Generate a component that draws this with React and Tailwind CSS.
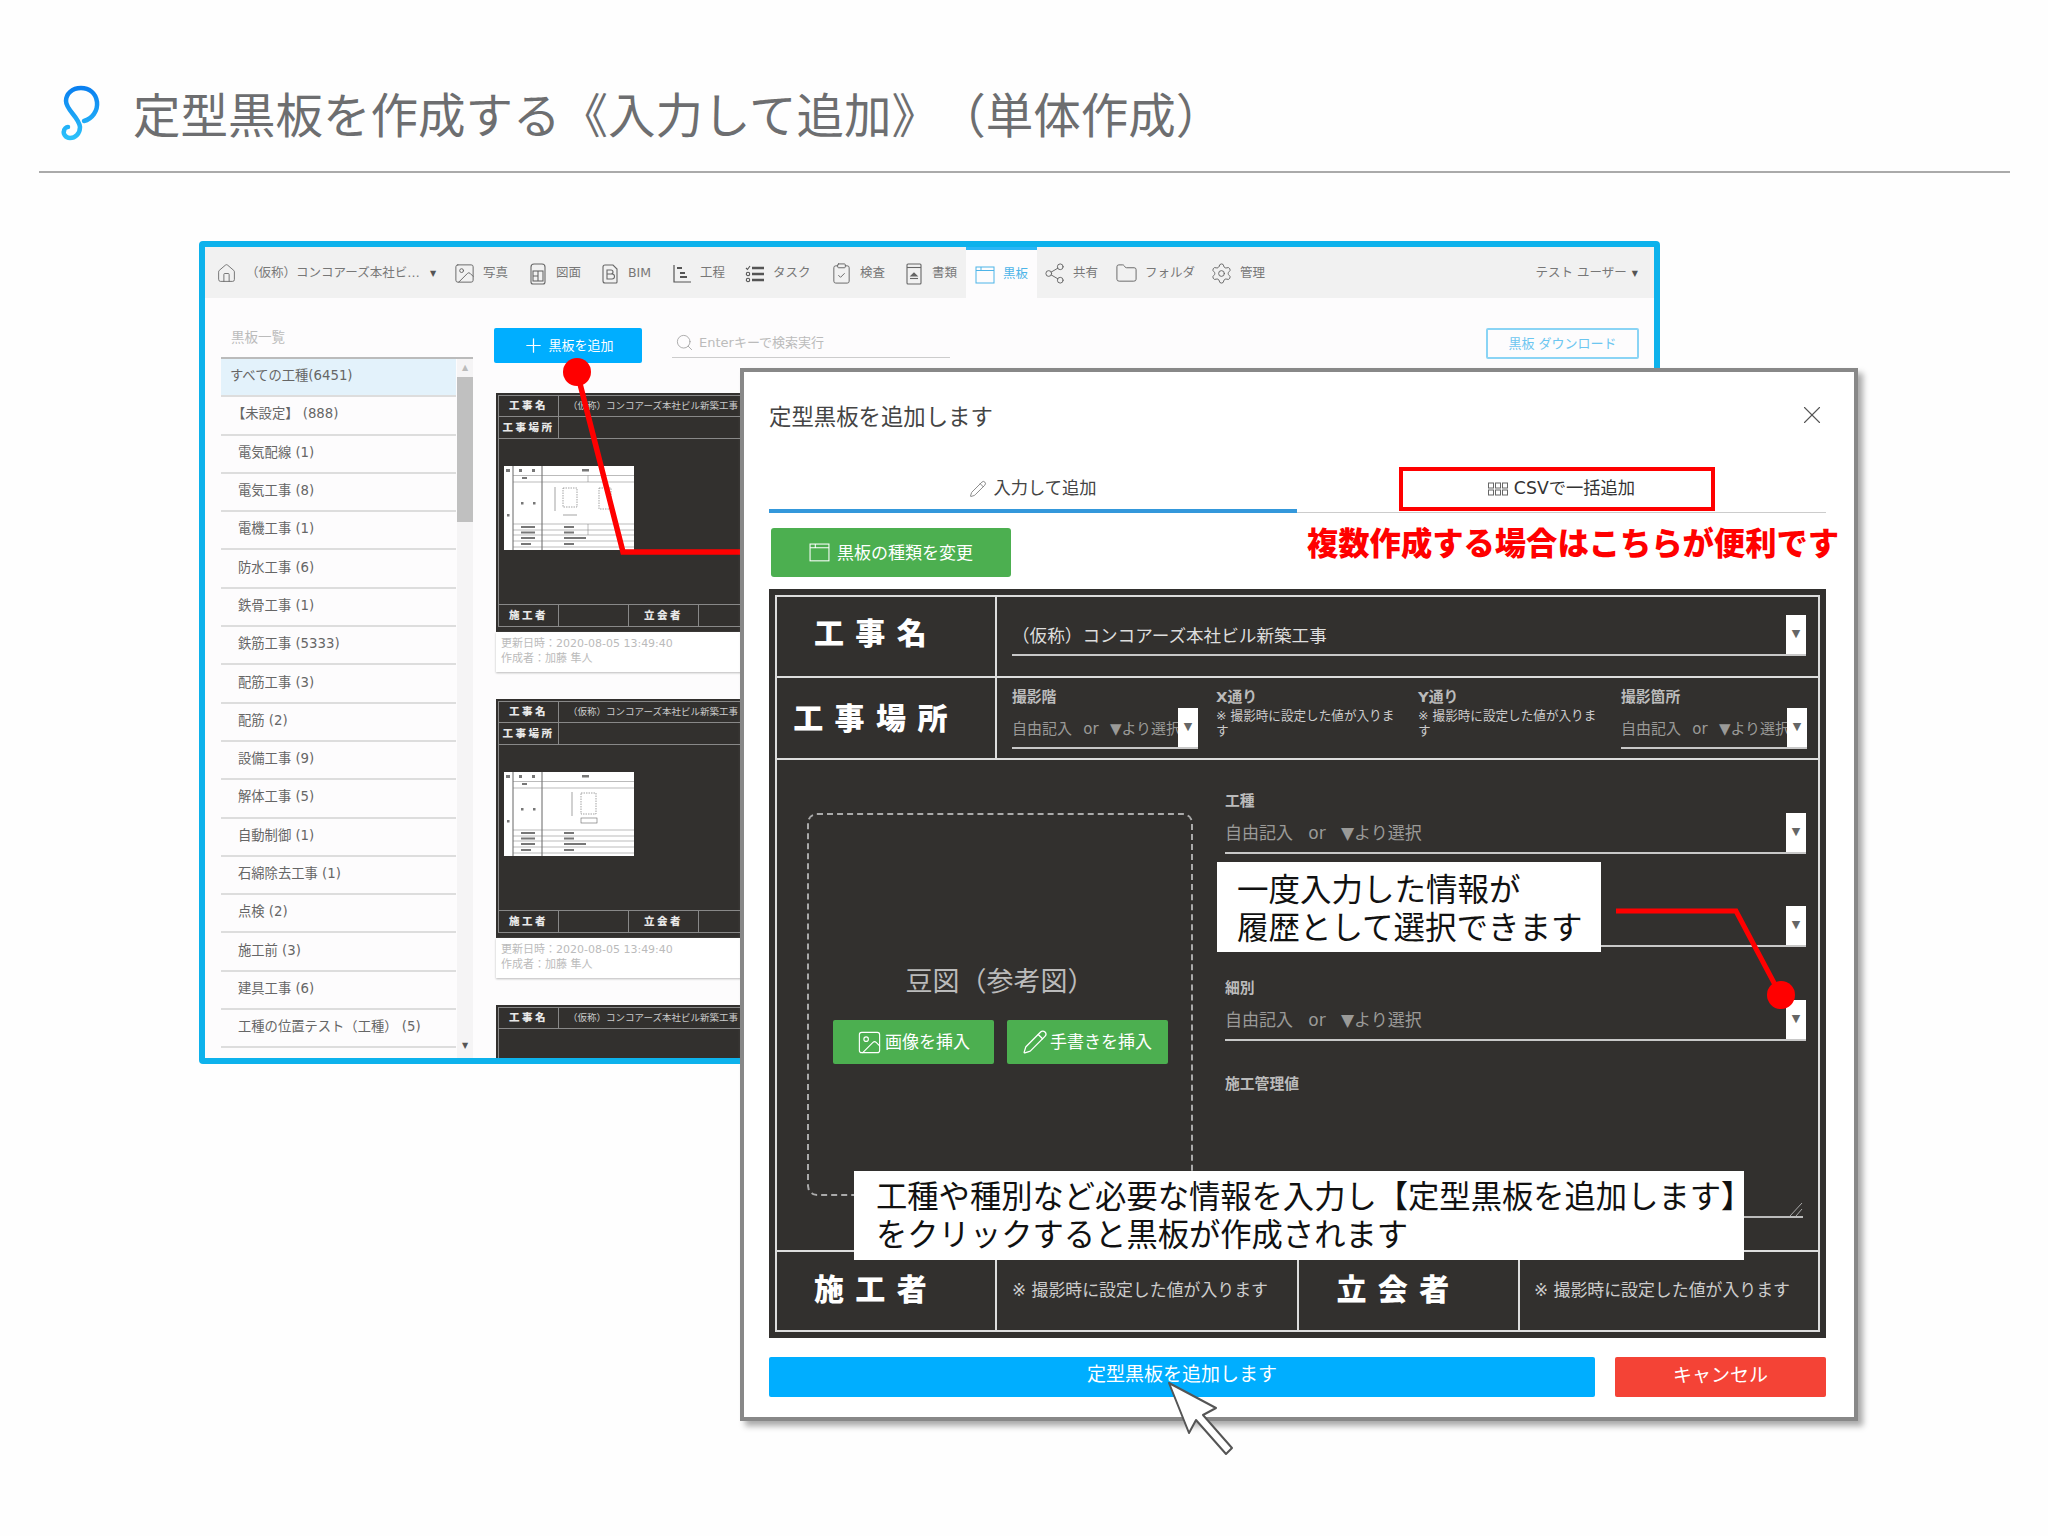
import React from 'react';
import { House, Image, ClipboardCheck, Share2, Folder, Settings, Pencil, Search, Plus, X } from 'lucide-react';

const categories = [
    { name: 'すべての工種(6451)', pl: 'pl-[9px]', active: true },
    { name: '【未設定】 (888)', pl: 'pl-[11px]' },
    { name: '電気配線 (1)' }, { name: '電気工事 (8)' }, { name: '電機工事 (1)' }, { name: '防水工事 (6)' },
    { name: '鉄骨工事 (1)' }, { name: '鉄筋工事 (5333)' }, { name: '配筋工事 (3)' }, { name: '配筋 (2)' },
    { name: '設備工事 (9)' }, { name: '解体工事 (5)' }, { name: '自動制御 (1)' }, { name: '石綿除去工事 (1)' },
    { name: '点検 (2)' }, { name: '施工前 (3)' }, { name: '建具工事 (6)' }, { name: '工種の位置テスト（工種） (5)' },
];

const ICON = { size: 23, strokeWidth: 1, className: 'text-[#666] shrink-0 -ml-[2px]' };

function DocIcon({ kind }) {
    return (
        <svg width="20" height="22" viewBox="0 0 20 22" fill="none" stroke="#666" strokeWidth="1.1" className="shrink-0">
            {kind === 'plan' && <><path d="M6 1h8a3 3 0 0 1 3 3v15a2 2 0 0 1-2 2H5a2 2 0 0 1-2-2V4a3 3 0 0 1 3-3z" /><rect x="5" y="8" width="10" height="10" /><path d="M10 8v10M5 13h5" /></>}
            {kind === 'bim' && <><path d="M5 2h8l4 4v13a1 1 0 0 1-1 1H5a2 2 0 0 1-2-2V4a2 2 0 0 1 2-2z" /><path d="M7 7h4a2 2 0 0 1 0 4H7zM7 11h5a2.5 2.5 0 0 1 0 5H7z" /></>}
            {kind === 'doc' && <><rect x="3" y="1" width="14" height="20" rx="1" /><path d="M3 4.5h14" /><path d="M7 13l3-3 3 3z" fill="#666" /><path d="M6 15.5h8" /></>}
        </svg>
    );
}

function GanttIcon() {
    return (
        <svg width="20" height="20" viewBox="0 0 20 20" fill="none" stroke="#555" strokeWidth="1.2" className="shrink-0">
            <path d="M2 1v17h17" />
            <path d="M5 4h5M8 9h5M8 13h7" strokeWidth="1.8" />
        </svg>
    );
}

function TaskIcon() {
    return (
        <svg width="20" height="20" viewBox="0 0 20 20" fill="none" stroke="#555" className="shrink-0">
            <path d="M1 4l1.5 1.5L5 2" strokeWidth="1.1" />
            <circle cx="3" cy="10" r="1.7" strokeWidth="1.1" />
            <circle cx="3" cy="16" r="1.7" strokeWidth="1.1" />
            <path d="M7 4h12M7 10h12M7 16h12" strokeWidth="2.6" />
        </svg>
    );
}

function BoardIcon({ color = '#fff', size = 20 }) {
    return (
        <svg width={size} height={size * 0.9} viewBox="0 0 20 18" fill="none" stroke={color} strokeWidth="1">
            <rect x="1" y="1" width="18" height="16" />
            <path d="M1 4.5h18M6 1v3.5" />
        </svg>
    );
}

function NavItem({ icon, label, width }) {
    return (
        <div className={`flex items-center h-full ${width}`}>
            <span className="w-[28px] flex items-center shrink-0">{icon}</span>
            <span className="text-[12.5px] text-[#777] whitespace-nowrap">{label}</span>
        </div>
    );
}

function NavBar() {
    return (
        <div className="h-[51px] bg-[#f1f1f1] flex items-center pt-[2px] pl-[11px] pr-[16px] shrink-0">
            <House size={21} strokeWidth={1} className="text-[#666] shrink-0" />
            <span className="ml-[9px] w-[176px] text-[12.5px] text-[#777] whitespace-nowrap">（仮称）コンコアーズ本社ビ…</span>
            <span className="ml-[8px] w-[25px] text-[8px] text-[#555]">▼</span>
            <NavItem width="w-[73px]" icon={<Image {...ICON} />} label="写真" />
            <NavItem width="w-[72px]" icon={<DocIcon kind="plan" />} label="図面" />
            <NavItem width="w-[72px]" icon={<DocIcon kind="bim" />} label="BIM" />
            <NavItem width="w-[73px]" icon={<GanttIcon />} label="工程" />
            <NavItem width="w-[87px]" icon={<TaskIcon />} label="タスク" />
            <NavItem width="w-[72px]" icon={<ClipboardCheck {...ICON} />} label="検査" />
            <NavItem width="w-[62px]" icon={<DocIcon kind="doc" />} label="書類" />
            <div className="w-[71px] h-[51px] mt-[-2px] pl-[9px] pt-[1px] flex items-center bg-[#fdfcfd] border-t-[3px] border-[#29b6f6]">
                <span className="w-[28px] shrink-0"><BoardIcon color="#4db4e8" /></span>
                <span className="text-[12.5px] text-[#4db4e8]">黒板</span>
            </div>
            <div className="w-[80px] h-full pl-[8px]">
                <NavItem width="w-full" icon={<Share2 {...ICON} />} label="共有" />
            </div>
            <NavItem width="w-[95px]" icon={<Folder {...ICON} />} label="フォルダ" />
            <NavItem width="w-[60px]" icon={<Settings {...ICON} />} label="管理" />
            <span className="ml-auto text-[12.5px] text-[#777] whitespace-nowrap">テスト ユーザー</span>
            <span className="ml-[5px] text-[8px] text-[#555]">▼</span>
        </div>
    );
}

function Sidebar() {
    return (
        <div className="w-[268px] pl-[16px] shrink-0 flex flex-col">
            <div className="h-[59px] pt-[29px] pl-[10px] text-[13.5px] leading-[20px] text-[#bbb]">黒板一覧</div>
            <div className="flex-1 w-[252px] flex border-t-2 border-[#bbb]">
                <div className="w-[235px] shrink-0">
                    {categories.map((c) => (
                        <div key={c.name} className={`h-[38.3px] flex items-center border-b-2 border-[#ddd] pb-[2px] text-[13.3px] text-[#666] whitespace-nowrap ${c.pl || 'pl-[17px]'} ${c.active ? 'bg-[#e3f2fb]' : ''}`}>
                            {c.name}
                        </div>
                    ))}
                </div>
                <div className="flex-1 ml-[1px] bg-[#f5f4f5] flex flex-col">
                    <div className="h-[18px] flex items-center justify-center text-[8px] text-[#bbb]">▲</div>
                    <div className="h-[145px] bg-[#c0c0c0]" />
                    <div className="flex-1" />
                    <div className="h-[24px] flex items-center justify-center text-[8px] text-[#555]">▼</div>
                </div>
            </div>
        </div>
    );
}

function Drawing({ twoSections }) {
    return (
        <svg width="130" height="84" viewBox="0 0 130 84" className="block">
            <rect width="130" height="84" fill="#fff" />
            <g stroke="#777" strokeWidth="0.5" fill="none">
                <path d="M9 0v84M38 0v84" strokeWidth="0.9" stroke="#555" />
                <path d="M9 9.5h121M9 16h121M9 58h121M9 64h121M9 69h121M9 75h121M9 81h121" />
                {twoSections && <path d="M84 9.5v6.5M84 58v11" />}
            </g>
            <g fill="#777">
                <rect x="2" y="3" width="4" height="3" />
                <rect x="15" y="3" width="3" height="3" />
                <rect x="28" y="3" width="3" height="3" />
                <rect x="78" y="3" width="7" height="2.5" />
                <rect x="17" y="36" width="2.5" height="2.5" />
                <rect x="29" y="36" width="2.5" height="2.5" />
                <rect x="3" y="48" width="2.5" height="2.5" />
                <rect x="18" y="11" width="5" height="2" />
                <rect x="60" y="60" width="10" height="2" />
                <rect x="60" y="65.5" width="10" height="2" />
                <rect x="60" y="71" width="22" height="2" />
                <rect x="60" y="77" width="10" height="2" />
                <rect x="17" y="60" width="14" height="2" />
                <rect x="17" y="65.5" width="14" height="2" />
                <rect x="17" y="71" width="14" height="2" />
                <rect x="17" y="77" width="10" height="2" />
            </g>
            {twoSections ? (
                <g fill="none" stroke="#666" strokeWidth="0.6">
                    <rect x="59" y="22" width="14" height="19" strokeDasharray="1.5 1" />
                    <path d="M51 21v24M59 49h14" />
                    <rect x="95" y="22" width="12" height="21" strokeDasharray="1.5 1" />
                </g>
            ) : (
                <g fill="none" stroke="#666" strokeWidth="0.6">
                    <rect x="77" y="21" width="15" height="21" strokeDasharray="1.5 1" />
                    <path d="M68 20v24" />
                    <rect x="77" y="46" width="16" height="5" />
                </g>
            )}
        </svg>
    );
}

function BoardCard({ twoSections, cut }) {
    const label = 'text-[10.5px] font-black text-[#e8e8e8] tracking-[2.5px] flex items-center justify-center w-[60px] border-r border-[#888] h-full whitespace-nowrap';
    return (
        <div className="w-[360px] shrink-0">
            <div className="bg-[#32302e] p-[2px] h-[239px]">
                <div className="border border-[#888] h-[232px] flex flex-col">
                    <div className="h-[21px] flex items-center border-b border-[#888] shrink-0">
                        <div className={label}>工事名</div>
                        <span className="ml-[9px] text-[9.5px] text-[#ccc] whitespace-nowrap">（仮称）コンコアーズ本社ビル新築工事</span>
                    </div>
                    {!cut && (
                        <>
                            <div className="h-[22px] flex items-center border-b border-[#888] shrink-0">
                                <div className={label}>工事場所</div>
                            </div>
                            <div className="flex-1 pt-[27px] pl-[5px]">
                                <Drawing twoSections={twoSections} />
                            </div>
                            <div className="h-[22px] flex items-center border-t border-[#888] shrink-0">
                                <div className={label}>施工者</div>
                                <div className="w-[70px] h-full border-r border-[#888]" />
                                <div className="w-[70px] h-full border-r border-[#888] flex items-center justify-center text-[10.5px] font-black text-[#e8e8e8] tracking-[2.5px]">立会者</div>
                            </div>
                        </>
                    )}
                </div>
            </div>
            {!cut && (
                <div className="h-[40px] bg-white shadow-[0_1px_2px_#bbb] pl-[5px] pt-[4px] text-[11px] leading-[15px] text-[#bbb] whitespace-nowrap">
                    <div>更新日時：2020-08-05 13:49:40</div>
                    <div>作成者：加藤 隼人</div>
                </div>
            )}
        </div>
    );
}

function MainArea() {
    return (
        <div className="flex-1 min-w-0 flex flex-col pt-[30px] pl-[21px] overflow-hidden">
            <div className="flex shrink-0">
                <button className="w-[148px] h-[35px] rounded-[2px] bg-[#00aeff] text-white text-[13px] flex items-center justify-center gap-[3px]">
                    <Plus size={23} strokeWidth={1.3} />黒板を追加
                </button>
                <div className="ml-[30px] w-[278px] h-[30px] border-b border-[#ccc] flex items-center pl-[3px] gap-[5px] text-[13px] text-[#bbb]">
                    <Search size={19} strokeWidth={1} className="text-[#999]" />Enterキーで検索実行
                </div>
                <button className="ml-auto mr-[15px] w-[153px] h-[31px] rounded-[2px] border-2 border-[#8ad4f5] text-[13px] text-[#6cc6f0]">
                    黒板 ダウンロード
                </button>
            </div>
            <div className="mt-[30px] ml-[2px] flex flex-col gap-[27px]">
                <BoardCard twoSections />
                <BoardCard />
                <BoardCard cut />
            </div>
        </div>
    );
}

function Field({ children, dim = true, size = 'text-[17px]', pt = 'pt-[3px]' }) {
    return (
        <div className="flex border-b-2 border-[#c8c8c8] h-[41px]">
            <div className={`flex-1 min-w-0 overflow-hidden whitespace-nowrap flex items-center ${pt} ${size} ${dim ? 'text-[#9a9a98]' : 'text-[#ddd]'}`}>
                {children}
            </div>
            <div className="w-[20px] h-[39px] bg-white shrink-0 flex items-center justify-center text-[11px] text-[#666]">▼</div>
        </div>
    );
}

function Placeholder({ gap = 'ml-[0.75em]' }) {
    return (
        <span>自由記入<span className={gap}>or</span><span className={gap}>▼より選択</span></span>
    );
}

function BoardLabel({ children, className = '' }) {
    return (
        <div className={`flex items-center justify-center pr-[20px] text-[30px] font-black text-white tracking-[11.4px] whitespace-nowrap border-r-2 border-[#ddd] shrink-0 ${className}`}>
            {children}
        </div>
    );
}

function SmallLabel({ children, className = '' }) {
    return <div className={`text-[14.8px] leading-[16px] font-bold text-[#bbb] ${className}`}>{children}</div>;
}

function Note() {
    return (
        <div className="mt-[3px] text-[12.6px] leading-[15px] text-[#ccc] whitespace-nowrap">
            ※ 撮影時に設定した値が入りま<br />す
        </div>
    );
}

function GreenButton({ icon, children }) {
    return (
        <button className="w-[161px] h-[44px] rounded-[2px] bg-[#4caf50] text-white text-[17px] flex items-center justify-center gap-[2px] whitespace-nowrap">
            {icon}<span className="pt-[1px]">{children}</span>
        </button>
    );
}

function Blackboard() {
    return (
        <div className="w-[1057px] h-[749px] bg-[#32302e] p-[6px]">
            <div className="h-[737px] border-2 border-[#ddd] flex flex-col">
                <div className="h-[81px] flex border-b-2 border-[#ddd] shrink-0">
                    <BoardLabel className="w-[220px] pb-[7px]">工事名</BoardLabel>
                    <div className="flex-1 pl-[15px] pr-[12px] pt-[18px]">
                        <Field dim={false} size="text-[17.6px]" pt="pt-[4px]">（仮称）コンコアーズ本社ビル新築工事</Field>
                    </div>
                </div>
                <div className="h-[82px] flex border-b-2 border-[#ddd] shrink-0">
                    <BoardLabel className="w-[220px]">工事場所</BoardLabel>
                    <div className="flex-1 pl-[15px] pt-[11px] flex">
                        <div className="w-[186px] shrink-0">
                            <SmallLabel>撮影階</SmallLabel>
                            <div className="mt-[3px]"><Field size="text-[15px]"><Placeholder /></Field></div>
                        </div>
                        <div className="w-[178px] shrink-0 ml-[18px]">
                            <SmallLabel>X通り</SmallLabel>
                            <Note />
                        </div>
                        <div className="w-[178px] shrink-0 ml-[24px]">
                            <SmallLabel>Y通り</SmallLabel>
                            <Note />
                        </div>
                        <div className="w-[186px] shrink-0 ml-[25px]">
                            <SmallLabel>撮影箇所</SmallLabel>
                            <div className="mt-[3px]"><Field size="text-[15px]"><Placeholder /></Field></div>
                        </div>
                    </div>
                </div>
                <div className="h-[492px] flex border-b-2 border-[#ddd] shrink-0">
                    <div className="ml-[30px] mt-[53px] w-[386px] h-[383px] rounded-[10px] border-2 border-dashed border-[#aaa] flex flex-col items-center pt-[149px] shrink-0">
                        <div className="text-[27px] leading-[36px] text-[#bbb] whitespace-nowrap">豆図（参考図）</div>
                        <div className="mt-[20px] flex gap-[13px]">
                            <GreenButton icon={<Image size={27} strokeWidth={1} />}>画像を挿入</GreenButton>
                            <GreenButton icon={<Pencil size={26} strokeWidth={1.2} />}>手書きを挿入</GreenButton>
                        </div>
                    </div>
                    <div className="ml-[32px] w-[581px] pt-[33px] shrink-0">
                        <SmallLabel>工種</SmallLabel>
                        <div className="mt-[4px]"><Field><Placeholder gap="ml-[0.9em]" /></Field></div>
                        <SmallLabel className="mt-[32px]">種別</SmallLabel>
                        <div className="mt-[4px]"><Field><Placeholder gap="ml-[0.9em]" /></Field></div>
                        <SmallLabel className="mt-[33px]">細別</SmallLabel>
                        <div className="mt-[4px]"><Field><Placeholder gap="ml-[0.9em]" /></Field></div>
                        <SmallLabel className="mt-[35px]">施工管理値</SmallLabel>
                        <div className="relative w-[578px] h-[126px] border-b-2 border-[#bbb]">
                            <svg width="14" height="14" viewBox="0 0 14 14" className="absolute right-0 bottom-0" stroke="#aaa" strokeWidth="1">
                                <path d="M13 1L1 14M13 7L7 14" />
                            </svg>
                        </div>
                    </div>
                </div>
                <div className="flex-1 flex">
                    <BoardLabel className="w-[220px] pb-[4px]">施工者</BoardLabel>
                    <div className="w-[302px] pl-[15px] flex items-center text-[16.9px] text-[#ccc] whitespace-nowrap border-r-2 border-[#ddd]">※ 撮影時に設定した値が入ります</div>
                    <BoardLabel className="w-[221px] pb-[4px]">立会者</BoardLabel>
                    <div className="flex-1 pl-[14px] flex items-center text-[16.9px] text-[#ccc] whitespace-nowrap">※ 撮影時に設定した値が入ります</div>
                </div>
            </div>
        </div>
    );
}

function Modal() {
    return (
        <div className="absolute left-[740px] top-[368px] w-[1118px] h-[1053px] border-4 border-[#888] bg-white shadow-[5px_5px_6px_#aaa] pl-[25px] pr-[28px] pt-[30px]">
            <div className="flex items-center justify-between h-[30px]">
                <span className="text-[22.4px] leading-[30px] text-[#444]">定型黒板を追加します</span>
                <X size={30} strokeWidth={0.9} className="text-[#555] mr-[-1px] mt-[-4px]" />
            </div>
            <div className="mt-[35px] flex h-[46px]">
                <div className="w-[528px] border-b-4 border-[#3498db] flex items-center justify-center gap-[6px] pt-[1px] text-[17.3px] text-[#444]">
                    <Pencil size={18} strokeWidth={1} className="text-[#666]" />入力して追加
                </div>
                <div className="relative flex-1 border-b border-[#ccc] flex items-center justify-center gap-[6px] text-[17.3px] text-[#333] pb-[2px]">
                    <svg width="20" height="14" viewBox="0 0 20 14" fill="none" stroke="#666" strokeWidth="1">
                        <rect x="0.5" y="1" width="5" height="5" /><rect x="7.5" y="1" width="5" height="5" /><rect x="14.5" y="1" width="5" height="5" />
                        <rect x="0.5" y="8" width="5" height="5" /><rect x="7.5" y="8" width="5" height="5" /><rect x="14.5" y="8" width="5" height="5" />
                    </svg>
                    CSVで一括追加
                    <div className="absolute left-[102px] top-0 w-[316px] h-[44px] border-4 border-[#f00]" />
                </div>
            </div>
            <div className="mt-[15px] ml-[2px] h-[49px] flex items-center">
                <button className="w-[240px] h-[49px] shrink-0 rounded-[3px] bg-[#4caf50] text-white text-[17px] flex items-center justify-center gap-[7px]">
                    <BoardIcon size={21} /><span className="pt-[2px]">黒板の種類を変更</span>
                </button>
                <span className="ml-[296px] pb-[18px] text-[31.3px] leading-[32px] font-black text-[#f00] whitespace-nowrap">複数作成する場合はこちらが便利です</span>
            </div>
            <div className="mt-[12px]">
                <Blackboard />
            </div>
            <div className="mt-[19px] flex h-[40px]">
                <button className="w-[826px] rounded-[2px] bg-[#00aeff] text-white text-[19px] pb-[5px]">定型黒板を追加します</button>
                <button className="ml-[20px] w-[211px] rounded-[2px] bg-[#f44336] text-white text-[19px] pb-[3px]">キャンセル</button>
            </div>
        </div>
    );
}

export default function App() {
    return (
        <div className="relative w-[2048px] h-[1536px] overflow-hidden bg-[#fefefe] font-['DejaVu_Sans','Noto_Sans_CJK_JP',sans-serif]">
            <div className="ml-[39px] w-[1971px] h-[173px] border-b-2 border-[#aaa] pl-[21px] pt-[85px] flex items-start">
                <svg width="44" height="60" viewBox="0 0 44 60" fill="none" className="shrink-0">
                    <defs>
                        <linearGradient id="logoGrad" x1="0" y1="0" x2="0" y2="1">
                            <stop offset="0" stopColor="#0a80f0" />
                            <stop offset="1" stopColor="#2ac0fa" />
                        </linearGradient>
                    </defs>
                    <path d="M24 36C32 34 38 26 37 17C36 8 29 3 21 3C12 3 6 9 6 16C6 25 19 32 20 42C20 49 15 53 10 53C5 53 3 48 4 46C4 44 6 42 8 42" stroke="url(#logoGrad)" strokeWidth="4.5" strokeLinecap="round" />
                </svg>
                <h1 className="ml-[29px] mt-[-2px] text-[47.5px] leading-[60px] font-normal text-[#6d6e70] whitespace-nowrap font-['Noto_Sans_CJK_JP',sans-serif]">定型黒板を作成する《入力して追加》<span className="ml-[23px]">（単体作成）</span></h1>
            </div>

            <div className="mt-[68px] ml-[199px] w-[1461px] h-[823px] border-[6px] border-[#0db2ec] rounded-[4px] bg-[#fdfcfd] flex flex-col overflow-hidden">
                <NavBar />
                <div className="flex-1 min-h-0 flex">
                    <Sidebar />
                    <MainArea />
                </div>
            </div>

            {/* red leader from the add button, goes under the modal */}
            <svg width="200" height="220" viewBox="0 0 200 220" className="absolute left-[560px] top-[355px]">
                <circle cx="17" cy="17" r="14" fill="#f00" />
                <path d="M17 17L63 197H190" fill="none" stroke="#f00" strokeWidth="5.5" />
            </svg>

            <Modal />

            <div className="absolute left-[1217px] top-[862px] w-[384px] h-[90px] bg-white pl-[20px] pt-[6px] text-[31.5px] leading-[38px] text-[#111] whitespace-nowrap font-['Noto_Sans_CJK_JP',sans-serif]">
                一度入力した情報が<br />履歴として選択できます
            </div>
            <svg width="190" height="110" viewBox="0 0 190 110" className="absolute left-[1610px] top-[900px]">
                <path d="M6 11H126L171 96" fill="none" stroke="#f00" strokeWidth="5" />
                <circle cx="171" cy="95" r="14" fill="#f00" />
            </svg>
            <div className="absolute left-[854px] top-[1171px] w-[890px] h-[89px] bg-white pl-[22px] pt-[5px] text-[31.3px] leading-[38px] text-[#111] whitespace-nowrap font-['Noto_Sans_CJK_JP',sans-serif]">
                工種や種別など必要な情報を入力し【定型黒板を追加します】<br />をクリックすると黒板が作成されます
            </div>

            {/* mouse cursor on the submit button */}
            <svg width="80" height="80" viewBox="1160 1378 80 80" className="absolute left-[1160px] top-[1378px]">
                <path d="M1169 1383L1216 1408L1203 1415L1232 1448L1226 1454L1196 1420L1189 1433Z" fill="#fff" stroke="#555" strokeWidth="2" strokeLinejoin="round" />
            </svg>
        </div>
    );
}
